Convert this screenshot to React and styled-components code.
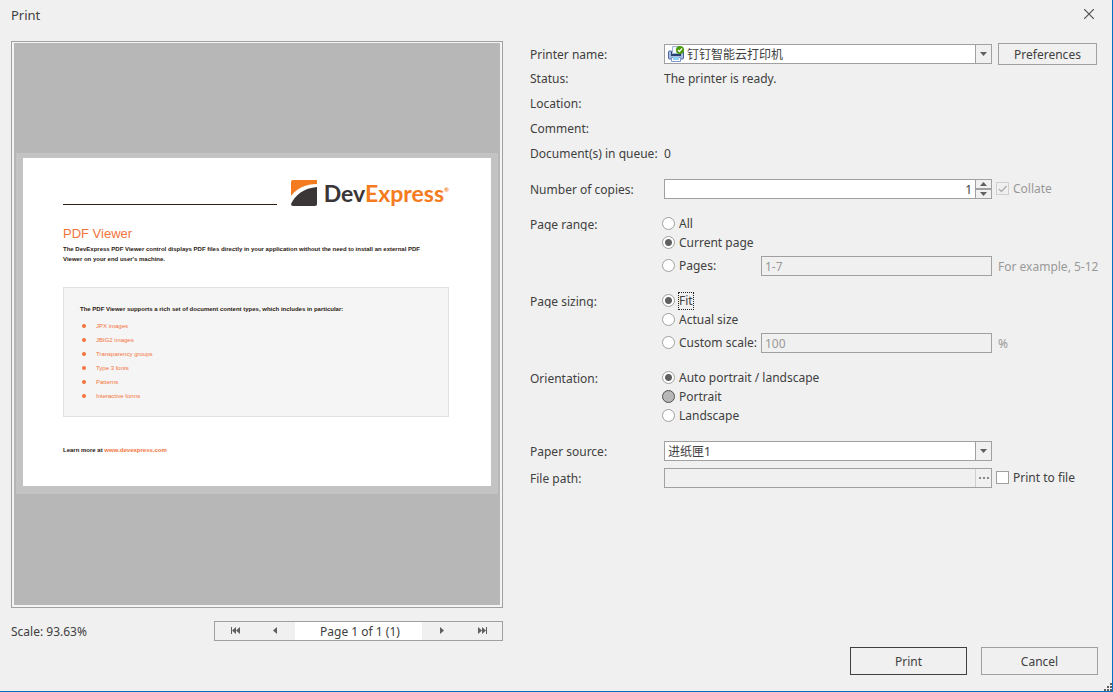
import React, { useState } from 'react'
import styled, { createGlobalStyle } from 'styled-components'

const GlobalStyle = createGlobalStyle`
    * {
        box-sizing: border-box;
    }

    body {
        margin: 0;
        background: #f0f0f0;
    }

    body, button, input, select {
        font-family: "Noto Sans", "Noto Sans CJK SC", sans-serif;
        font-size: 12px;
        line-height: 16px;
        color: #404040;
    }
`

const Dialog = styled.form`
    position: relative;
    display: flex;
    flex-direction: column;
    min-height: 100vh;
    padding: 0 14px 16px 11px;
    border-right: 1px solid #0072c6;
    border-bottom: 1px solid #0072c6;
    background: #f0f0f0;
`

const TitleBar = styled.header`
    display: flex;
    align-items: flex-start;
    justify-content: space-between;
    height: 41px;
    padding-top: 5px;
`

const Title = styled.h1`
    margin: 0;
    font-size: 13px;
    font-weight: 400;
    line-height: 20px;
`

const CloseButton = styled.button`
    display: flex;
    align-items: center;
    justify-content: center;
    width: 18px;
    height: 18px;
    padding: 0;
    border: 0;
    background: none;
`

const Body = styled.div`
    flex: 1;
    display: grid;
    grid-template-columns: minmax(0, 492fr) minmax(0, 568fr);
    column-gap: 27px;
`

/* left side: preview */

const PreviewColumn = styled.section`
    display: flex;
    flex-direction: column;
`

const PreviewFrame = styled.div`
    flex: 1;
    display: flex;
    border: 1px solid #a0a0a0;
    padding: 1px 2px 2px;
    background: #f4f4f4;
`

const PreviewArea = styled.div`
    flex: 1;
    display: flex;
    align-items: center;
    justify-content: center;
    padding: 0 2px 1px;
    background: #b7b7b7;
`

const PageShadow = styled.div`
    flex: 1;
    padding: 5px 7px 8px;
    background: #c3c3c3;
`

const Page = styled.article`
    padding: 22px 42px 31px 40px;
    background: #fff;
    color: #2b2013;
    font-family: "Liberation Sans", Arial, sans-serif;
    font-size: 6px;
    line-height: 10px;
`

const PageHeader = styled.div`
    display: flex;
    align-items: center;
    gap: 14px;
    height: 26px;
`

const Rule = styled.div`
    flex: 1;
    height: 1px;
    margin-top: 23px;
    background: #2b2013;
`

const Logo = styled.div`
    display: flex;
    align-items: center;
    gap: 7px;
    color: #3a3536;
    font-family: Lato, sans-serif;
    font-size: 23px;
    font-weight: 700;
    line-height: 26px;

    span {
        color: #f47b20;
    }

    sup {
        color: #f47b20;
        font-size: 6px;
        line-height: 6px;
        vertical-align: 10px;
    }
`

const PageTitle = styled.h2`
    margin: 20px 0 2px;
    color: #f4743b;
    font-size: 13px;
    font-weight: 400;
    line-height: 16px;
`

const Strong = styled.p`
    margin: 0;
    font-weight: 700;
    white-space: nowrap;

    a {
        color: #f4743b;
        text-decoration: none;
    }
`

const FeatureBox = styled.div`
    margin: 23px 0 28px;
    padding: 16px 16px 13px;
    border: 1px solid #e2e2e2;
    background: #f5f5f5;
`

const FeatureList = styled.ul`
    margin: 5px 0 0;
    padding: 0;
    list-style: none;
`

const Feature = styled.li`
    display: flex;
    align-items: center;
    gap: 10px;
    padding-left: 2px;
    color: #f4743b;
    line-height: 14px;

    &::before {
        content: "";
        width: 4px;
        height: 4px;
        border-radius: 50%;
        background: #f4743b;
    }
`

const PreviewFooter = styled.div`
    display: flex;
    align-items: center;
    justify-content: space-between;
    margin-top: 13px;
`

const Scale = styled.span`
    padding-top: 2px;
`

const Pager = styled.div`
    display: grid;
    grid-template-columns: 40px 40px 127px 40px 40px;
    height: 20px;
    border: 1px solid #a0a0a0;
`

const PagerButton = styled.button`
    display: flex;
    align-items: center;
    justify-content: center;
    padding: 0;
    border: 0;
    background: #f0f0f0;
`

const PagerText = styled.output`
    padding: 2px 0 0 3px;
    background: #fff;
    text-align: center;
`

/* right side: settings */

const Settings = styled.section`
    padding-top: 1px;
`

const Row = styled.div`
    display: grid;
    grid-template-columns: 134px minmax(0, 328fr) minmax(0, 106fr);
    align-items: center;
    min-height: ${props => props.$height || 20}px;
    margin-top: ${props => props.$gap || 0}px;
`

const RowLabel = styled.label`
    padding-top: 2px;
`

const Group = styled.fieldset`
    display: grid;
    grid-template-columns: 132px minmax(0, 1fr);
    margin: 15px 0 0;
    padding: 0;
    border: 0;
`

const GroupLabel = styled.div`
    height: ${props => (props.$short ? '17px' : 'auto')};
    padding-top: 3px;
    overflow: ${props => (props.$short ? 'hidden' : 'visible')};
`

const Options = styled.div`
    display: flex;
    flex-direction: column;
`

const OptionRow = styled.div`
    display: grid;
    grid-template-columns: 99px minmax(0, 231fr) minmax(0, 106fr);
    align-items: start;
    margin-top: 4px;
`

const Choice = styled.label`
    display: flex;
    align-items: center;
    gap: 4px;
    height: 19px;
    white-space: nowrap;
    color: ${props => (props.$muted ? '#999' : 'inherit')};
`

const ChoiceText = styled.span`
    outline: ${props => (props.$focused ? '1px dotted #202020' : 'none')};
`

const Radio = styled.input.attrs({ type: 'radio' })`
    appearance: none;
    flex: none;
    width: 13px;
    height: 13px;
    margin: 0;
    border: 1px solid ${props => (props.$hot ? '#505050' : '#a0a0a0')};
    border-radius: 50%;
    background: ${props => (props.$hot ? '#b7b7b7' : '#fff')};

    &:checked {
        background: radial-gradient(circle, #606060 3px, #fff 4px);
    }
`

const Check = styled.input.attrs({ type: 'checkbox' })`
    appearance: none;
    flex: none;
    width: 13px;
    height: 13px;
    margin: 0;
    border: 1px solid #a0a0a0;
    background: #fff;

    &:disabled {
        border-color: #cfcfcf;
        background: #f0f0f0 url("data:image/svg+xml,%3Csvg xmlns='http://www.w3.org/2000/svg' width='11' height='11'%3E%3Cpath d='M2 6l2.5 2.5L9.500 3' fill='none' stroke='%23b0b0b0' stroke-width='1.500'/%3E%3C/svg%3E") no-repeat;
    }
`

const SideCheck = styled(Choice)`
    padding-left: 4px;
    margin-bottom: 1px;
`

const Field = styled.div`
    display: flex;
    align-items: stretch;
    height: 20px;
    border: 1px solid #a0a0a0;
    background: ${props => (props.$disabled ? '#f0f0f0' : '#fff')};
`

const FieldIcon = styled.span`
    display: flex;
    align-items: center;
    padding-left: 3px;
`

const Select = styled.select`
    appearance: none;
    flex: 1;
    min-width: 0;
    padding: 2px 3px 0;
    border: 0;
    outline: 0;
    background: none;
`

const TextInput = styled.input`
    flex: 1;
    min-width: 0;
    padding: 2px 3px 0;
    border: 0;
    outline: 0;
    background: none;
    text-align: ${props => (props.$right ? 'right' : 'left')};

    &:disabled {
        color: #999;
    }
`

const FieldButton = styled.span`
    display: flex;
    align-items: center;
    justify-content: center;
    width: 16px;
    border-left: 1px solid #a0a0a0;
    background: #f0f0f0;
`

const BrowseButton = styled.button`
    display: flex;
    align-items: center;
    justify-content: center;
    width: 16px;
    padding: 0;
    border: 0;
    border-left: 1px solid #cfcfcf;
    background: #f0f0f0;
`

const Spinner = styled.div`
    display: grid;
    grid-template-rows: 8px 8px;
    row-gap: 2px;
    width: 16px;
    border-left: 1px solid #a0a0a0;
    background: #a0a0a0;
`

const SpinButton = styled.button`
    display: flex;
    align-items: center;
    justify-content: center;
    padding: 0;
    border: 0;
    background: #f0f0f0;
`

const Hint = styled.span`
    padding: 3px 0 0 6px;
    color: #999;
    white-space: nowrap;
`

const Button = styled.button`
    height: ${props => (props.$small ? 22 : 28)}px;
    min-width: ${props => (props.$small ? 99 : 117)}px;
    margin-left: ${props => (props.$small ? 6 : 0)}px;
    justify-self: start;
    padding: 2px 0 0;
    border: 1px solid ${props => (props.$primary ? '#404040' : '#a0a0a0')};
    background: #f0f0f0;
`

const Actions = styled.footer`
    display: flex;
    justify-content: flex-end;
    gap: 14px;
    margin-top: 6px;
`

const Grip = styled.svg`
    position: absolute;
    right: 0;
    bottom: 0;
`

const Arrow = ({ up }) => (
    <svg width="7" height="4" viewBox="0 0 7 4" fill="#606060" aria-hidden="true">
        <path d={up ? 'M0 4h7L3.500 0z' : 'M0 0h7L3.500 4z'} />
    </svg>
)

const NAV_ICONS = {
    first: { width: 9, d: 'M0 0h1v7H0zM5 0v7L1 3.500zM9 0v7L5 3.500z' },
    prev: { width: 4, d: 'M4 0v7L0 3.500z' },
    next: { width: 4, d: 'M0 0v7l4-3.500z' },
    last: { width: 9, d: 'M8 0h1v7H8zM0 0v7l4-3.500zM4 0v7l4-3.500z' }
}

const NavIcon = ({ name }) => (
    <svg width={NAV_ICONS[name].width} height="8" fill="#606060" aria-hidden="true">
        <path d={NAV_ICONS[name].d} />
    </svg>
)

const PrinterIcon = () => (
    <svg width="16" height="16" viewBox="0 0 16 16" aria-hidden="true">
        <path d="M4.500 .5h7v7h-7z" fill="#f4f8ff" stroke="#9db3d8" />
        <path d="M1.500 5h2v4h9V5h2a1 1 0 0 1 1 1v6a1 1 0 0 1-1 1h-13a1 1 0 0 1-1-1V6a1 1 0 0 1 1-1z" fill="#a9bce0" stroke="#4a68a5" />
        <path d="M3 6h1v2h8V6h1v4H3z" fill="#2b4172" />
        <path d="M3.500 11.500h9v4h-9z" fill="#fff" stroke="#7c98cc" />
        <path d="M5 11h6v3H5z" fill="#8fd0f8" />
        <circle cx="12" cy="4" r="4" fill="#4c9a0c" />
        <path d="M10 4l1.500 1.500L14 2.500" fill="none" stroke="#fff" strokeWidth="1.200" />
    </svg>
)

const LogoMark = () => (
    <svg width="26" height="26" viewBox="0 0 26 26" aria-hidden="true">
        <path d="M2 0h24v4C15 4 6 8 0 16V2a2 2 0 0 1 2-2z" fill="#f47b20" />
        <path d="M26 7v17a2 2 0 0 1-2 2H2a2 2 0 0 1-2-2C4 15 13 8 26 7z" fill="#3a3536" />
    </svg>
)

const features = ['JPX images', 'JBIG2 images', 'Transparency groups', 'Type 3 fonts', 'Patterns', 'Interactive forms']

const Preview = () => (
    <PreviewColumn>
        <PreviewFrame>
            <PreviewArea>
                <PageShadow>
                    <Page>
                        <PageHeader>
                            <Rule />
                            <Logo>
                                <LogoMark />
                                <div>Dev<span>Express</span><sup>®</sup></div>
                            </Logo>
                        </PageHeader>
                        <PageTitle>PDF Viewer</PageTitle>
                        <Strong>
                            The DevExpress PDF Viewer control displays PDF files directly in your application without the need to install an external PDF
                            <br />
                            Viewer on your end user's machine.
                        </Strong>
                        <FeatureBox>
                            <Strong>The PDF Viewer supports a rich set of document content types, which includes in particular:</Strong>
                            <FeatureList>
                                {features.map(name => <Feature key={name}>{name}</Feature>)}
                            </FeatureList>
                        </FeatureBox>
                        <Strong>Learn more at <a href="#devexpress">www.devexpress.com</a></Strong>
                    </Page>
                </PageShadow>
            </PreviewArea>
        </PreviewFrame>
        <PreviewFooter>
            <Scale>Scale: 93.63%</Scale>
            <Pager>
                <PagerButton type="button" aria-label="First page"><NavIcon name="first" /></PagerButton>
                <PagerButton type="button" aria-label="Previous page"><NavIcon name="prev" /></PagerButton>
                <PagerText>Page 1 of 1 (1)</PagerText>
                <PagerButton type="button" aria-label="Next page"><NavIcon name="next" /></PagerButton>
                <PagerButton type="button" aria-label="Last page"><NavIcon name="last" /></PagerButton>
            </Pager>
        </PreviewFooter>
    </PreviewColumn>
)

export default function App() {
    const [copies, setCopies] = useState(1)
    const [range, setRange] = useState('current')
    const [sizing, setSizing] = useState('fit')
    const [orientation, setOrientation] = useState('auto')
    const [toFile, setToFile] = useState(false)

    const option = (group, value, current, onChange, text, extra = {}) => (
        <Choice>
            <Radio name={group} checked={current === value} onChange={() => onChange(value)} $hot={extra.hot} />
            <ChoiceText $focused={extra.focused}>{text}</ChoiceText>
        </Choice>
    )

    return (
        <Dialog onSubmit={event => event.preventDefault()}>
            <GlobalStyle />
            <TitleBar>
                <Title>Print</Title>
                <CloseButton type="button" aria-label="Close">
                    <svg width="10" height="10" stroke="#505050" strokeWidth="1.200" aria-hidden="true">
                        <path d="M0 0l10 10M10 0L0 10" />
                    </svg>
                </CloseButton>
            </TitleBar>
            <Body>
                <Preview />
                <Settings>
                    <Row $height={24}>
                        <RowLabel htmlFor="printer">Printer name:</RowLabel>
                        <Field>
                            <FieldIcon><PrinterIcon /></FieldIcon>
                            <Select id="printer">
                                <option>钉钉智能云打印机</option>
                            </Select>
                            <FieldButton><Arrow /></FieldButton>
                        </Field>
                        <Button type="button" $small>Preferences</Button>
                    </Row>
                    <Row $height={25}>
                        <span>Status:</span>
                        <span>The printer is ready.</span>
                    </Row>
                    <Row $height={25}><span>Location:</span></Row>
                    <Row $height={25}><span>Comment:</span></Row>
                    <Row $height={25}>
                        <span>Document(s) in queue:</span>
                        <span>0</span>
                    </Row>
                    <Row $gap={13}>
                        <RowLabel htmlFor="copies">Number of copies:</RowLabel>
                        <Field>
                            <TextInput id="copies" $right value={copies} onChange={event => setCopies(Number(event.target.value) || 1)} />
                            <Spinner>
                                <SpinButton type="button" aria-label="More copies" onClick={() => setCopies(copies + 1)}><Arrow up /></SpinButton>
                                <SpinButton type="button" aria-label="Fewer copies" onClick={() => setCopies(Math.max(1, copies - 1))}><Arrow /></SpinButton>
                            </Spinner>
                        </Field>
                        <SideCheck $muted>
                            <Check defaultChecked disabled />
                            <span>Collate</span>
                        </SideCheck>
                    </Row>
                    <Group aria-label="Page range">
                        <GroupLabel $short>Page range:</GroupLabel>
                        <Options>
                            {option('range', 'all', range, setRange, 'All')}
                            {option('range', 'current', range, setRange, 'Current page')}
                            <OptionRow>
                                {option('range', 'pages', range, setRange, 'Pages:')}
                                <Field $disabled>
                                    <TextInput aria-label="Pages" defaultValue="1-7" disabled={range !== 'pages'} />
                                </Field>
                                <Hint>For example, 5-12</Hint>
                            </OptionRow>
                        </Options>
                    </Group>
                    <Group aria-label="Page sizing">
                        <GroupLabel $short>Page sizing:</GroupLabel>
                        <Options>
                            {option('sizing', 'fit', sizing, setSizing, 'Fit', { focused: true })}
                            {option('sizing', 'actual', sizing, setSizing, 'Actual size')}
                            <OptionRow>
                                {option('sizing', 'custom', sizing, setSizing, 'Custom scale:')}
                                <Field $disabled>
                                    <TextInput aria-label="Custom scale" defaultValue="100" disabled={sizing !== 'custom'} />
                                </Field>
                                <Hint>%</Hint>
                            </OptionRow>
                        </Options>
                    </Group>
                    <Group aria-label="Orientation">
                        <GroupLabel>Orientation:</GroupLabel>
                        <Options>
                            {option('orientation', 'auto', orientation, setOrientation, 'Auto portrait / landscape')}
                            {option('orientation', 'portrait', orientation, setOrientation, 'Portrait', { hot: true })}
                            {option('orientation', 'landscape', orientation, setOrientation, 'Landscape')}
                        </Options>
                    </Group>
                    <Row $gap={16}>
                        <RowLabel htmlFor="source">Paper source:</RowLabel>
                        <Field>
                            <Select id="source">
                                <option>进纸匣1</option>
                            </Select>
                            <FieldButton><Arrow /></FieldButton>
                        </Field>
                    </Row>
                    <Row $gap={7}>
                        <RowLabel htmlFor="path">File path:</RowLabel>
                        <Field $disabled>
                            <TextInput id="path" disabled={!toFile} />
                            <BrowseButton type="button" aria-label="Browse">
                                <svg width="10" height="2" fill="#8a8a8a" aria-hidden="true">
                                    <path d="M0 0h2v2H0zM4 0h2v2H4zM8 0h2v2H8z" />
                                </svg>
                            </BrowseButton>
                        </Field>
                        <SideCheck>
                            <Check checked={toFile} onChange={() => setToFile(!toFile)} />
                            <span>Print to file</span>
                        </SideCheck>
                    </Row>
                </Settings>
            </Body>
            <Actions>
                <Button type="submit" $primary>Print</Button>
                <Button type="button">Cancel</Button>
            </Actions>
            <Grip width="8" height="8" fill="#606060" aria-hidden="true">
                <path d="M6 0h2v2H6zM3 3h2v2H3zM6 3h2v2H6zM0 6h2v2H0zM3 6h2v2H3zM6 6h2v2H6z" />
            </Grip>
        </Dialog>
    )
}
